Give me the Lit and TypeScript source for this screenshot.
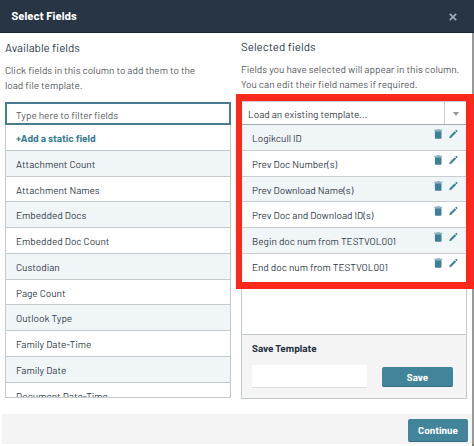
import { LitElement, html, css, svg } from "lit";
import { customElement, property } from "lit/decorators.js";

const AVAILABLE = [
  "Attachment Count",
  "Attachment Names",
  "Embedded Docs",
  "Embedded Doc Count",
  "Custodian",
  "Page Count",
  "Outlook Type",
  "Family Date-Time",
  "Family Date",
  "Document Date-Time",
];

const SELECTED = [
  "Logikcull ID",
  "Prev Doc Number(s)",
  "Prev Download Name(s)",
  "Prev Doc and Download ID(s)",
  "Begin doc num from TESTVOL001",
  "End doc num from TESTVOL001",
];

const trash = svg`<path opacity=".75" d="M.2.800h2.400L3 .3h2.400L5.800.8h2.400v1H.2z" /><path d="M.9 2.300h6.600v6.500q0 .9-.9.900H1.800q-.9 0-.9-.9z" />`;
const pencil = svg`<path d="M.3 9.200l.4-2L5.700 2.200l1.500 1.500L2.200 8.800z M6.200 1.700l.7-.7q.4-.4.8 0l.7.7q.4.400 0 .8l-.7.7z" />`;

@customElement("selected-row")
class SelectedRow extends LitElement {
  @property() name = "";

  static styles = css`
    :host {
      display: flex;
      box-sizing: border-box;
      height: 25.75px;
      padding: 0 8px 0 10px;
      border-bottom: 1px solid #c9cdd1;
    }

    :host(:last-child) {
      border-bottom: 0;
    }

    .name {
      flex: 1;
      line-height: 27px;
      white-space: nowrap;
    }

    .icon {
      width: 9px;
      height: 10px;
      margin: 4px 0 0 6px;
      fill: #3f7f93;
    }
  `;

  render() {
    return html`
      <span class="name">${this.name}</span>
      <svg class="icon" viewBox="0 0 9 10">${trash}</svg>
      <svg class="icon" viewBox="0 0 9 10">${pencil}</svg>
    `;
  }
}

@customElement("app-root")
class AppRoot extends LitElement {
  static styles = css`
    :host {
      display: block;
      position: relative;
      box-sizing: border-box;
      width: 474px;
      height: 446px;
      overflow: hidden;
      background: #fff;
      color: #323c48;
      font-family: Barlow, Roboto, sans-serif;
      font-size: 10px;
      text-rendering: geometricPrecision;
    }

    * {
      box-sizing: border-box;
    }

    .header {
      display: flex;
      justify-content: space-between;
      align-items: center;
      height: 33px;
      padding: 1px 17px 0 11.5px;
      background: #283544;
      border-bottom: 1px solid #1c242e;
      color: #fff;
      font-size: 11.4px;
      font-weight: 700;
    }

    .close {
      width: 8px;
      height: 8px;
      stroke: #a2abb5;
      stroke-width: 1.7;
    }

    .body {
      display: flex;
      gap: 10px;
      height: 381px;
      padding: 0 5px;
      border-right: 2px solid #999;
    }

    .column {
      width: 226px;
      flex: none;
    }

    .heading {
      height: 30px;
      padding-top: 8px;
      color: #2e3a4a;
      font-size: 11.6px;
      line-height: 15px;
    }

    .right .heading {
      height: 29px;
      padding-top: 7px;
    }

    .intro {
      height: 39px;
      color: #55595e;
      line-height: 15px;
      white-space: nowrap;
    }

    .filter {
      height: 23px;
      padding-left: 9px;
      border: 2px solid #477d8e;
      color: #55595e;
      line-height: 22px;
    }

    .list {
      height: 273px;
      overflow: hidden;
      border: 1px solid #c5cacd;
      border-top: 0;
    }

    .item {
      height: 25.75px;
      padding-left: 10px;
      border-bottom: 1px solid #c5cacd;
      line-height: 27px;
    }

    .item:nth-child(even),
    .selected selected-row:nth-child(odd) {
      background: #f0f5f8;
    }

    .static {
      color: #3b7d92;
      font-weight: 700;
    }

    .panel {
      display: flex;
      flex-direction: column;
      height: 298px;
      border: 1px solid #c5cacd;
    }

    .select {
      display: flex;
      justify-content: space-between;
      height: 23px;
      border-bottom: 1px solid #aaa;
      padding-left: 6px;
      line-height: 24px;
    }

    .arrow {
      width: 22px;
      padding: 10px 0 0 8px;
      border-left: 1px solid #ccc;
      line-height: 0;
    }

    .arrow svg {
      width: 6px;
      height: 4px;
      fill: #999;
    }

    .selected {
      flex: 1;
    }

    .template {
      height: 64px;
      padding: 6px 13px 0 10px;
      background: #f4f4f4;
      border-top: 1px solid #c5cacd;
    }

    .label {
      height: 24px;
      color: #283544;
      font-weight: 700;
      line-height: 15px;
    }

    .save-row {
      display: flex;
      justify-content: space-between;
      align-items: center;
    }

    .input {
      width: 115px;
      height: 23px;
      background: #fff;
      border-bottom: 1px solid #ddd;
    }

    .button {
      width: 71px;
      height: 20px;
      border-radius: 2px;
      background: #42849a;
      border-bottom: 1px solid #376f81;
      color: #fff;
      font-weight: 700;
      line-height: 20px;
      text-align: center;
    }

    .footer {
      display: flex;
      justify-content: flex-end;
      height: 30px;
      padding: 5px 4px 0 0;
      margin-left: 2px;
      background: #f4f4f4;
      border-right: 2px solid #999;
    }

    .continue {
      width: 60px;
      height: 23px;
      line-height: 22px;
    }

    .edge {
      height: 2px;
      border-right: 2px solid #777;
    }

    /* callout drawn over the selected fields */
    .callout {
      position: absolute;
      left: 236px;
      top: 94px;
      width: 238px;
      height: 195px;
      border: 7px solid #fc281b;
      border-left-width: 6px;
      border-right-width: 8px;
    }
  `;

  render() {
    return html`
      <div class="header">
        <span>Select Fields</span>
        <svg class="close" viewBox="0 0 8 8"><path d="M.8.8l6.400 6.400M7.200.8L.8 7.200" /></svg>
      </div>
      <div class="body">
        <div class="column">
          <div class="heading">Available fields</div>
          <div class="intro">Click fields in this column to add them to the<br />load file template.</div>
          <div class="filter">Type here to filter fields</div>
          <div class="list">
            <div class="item static">+Add a static field</div>
            ${AVAILABLE.map((name) => html`<div class="item">${name}</div>`)}
          </div>
        </div>
        <div class="column right">
          <div class="heading">Selected fields</div>
          <div class="intro">Fields you have selected will appear in this column.<br />You can edit their field names if required.</div>
          <div class="panel">
            <div class="select">
              <span>Load an existing template...</span>
              <span class="arrow"><svg viewBox="0 0 6 4"><path d="M0 0h6L3 4z" /></svg></span>
            </div>
            <div class="selected">
              ${SELECTED.map((name) => html`<selected-row .name=${name}></selected-row>`)}
            </div>
            <div class="template">
              <div class="label">Save Template</div>
              <div class="save-row">
                <div class="input"></div>
                <div class="button">Save</div>
              </div>
            </div>
          </div>
        </div>
      </div>
      <div class="footer"><div class="button continue">Continue</div></div>
      <div class="edge"></div>
      <div class="callout"></div>
    `;
  }
}
